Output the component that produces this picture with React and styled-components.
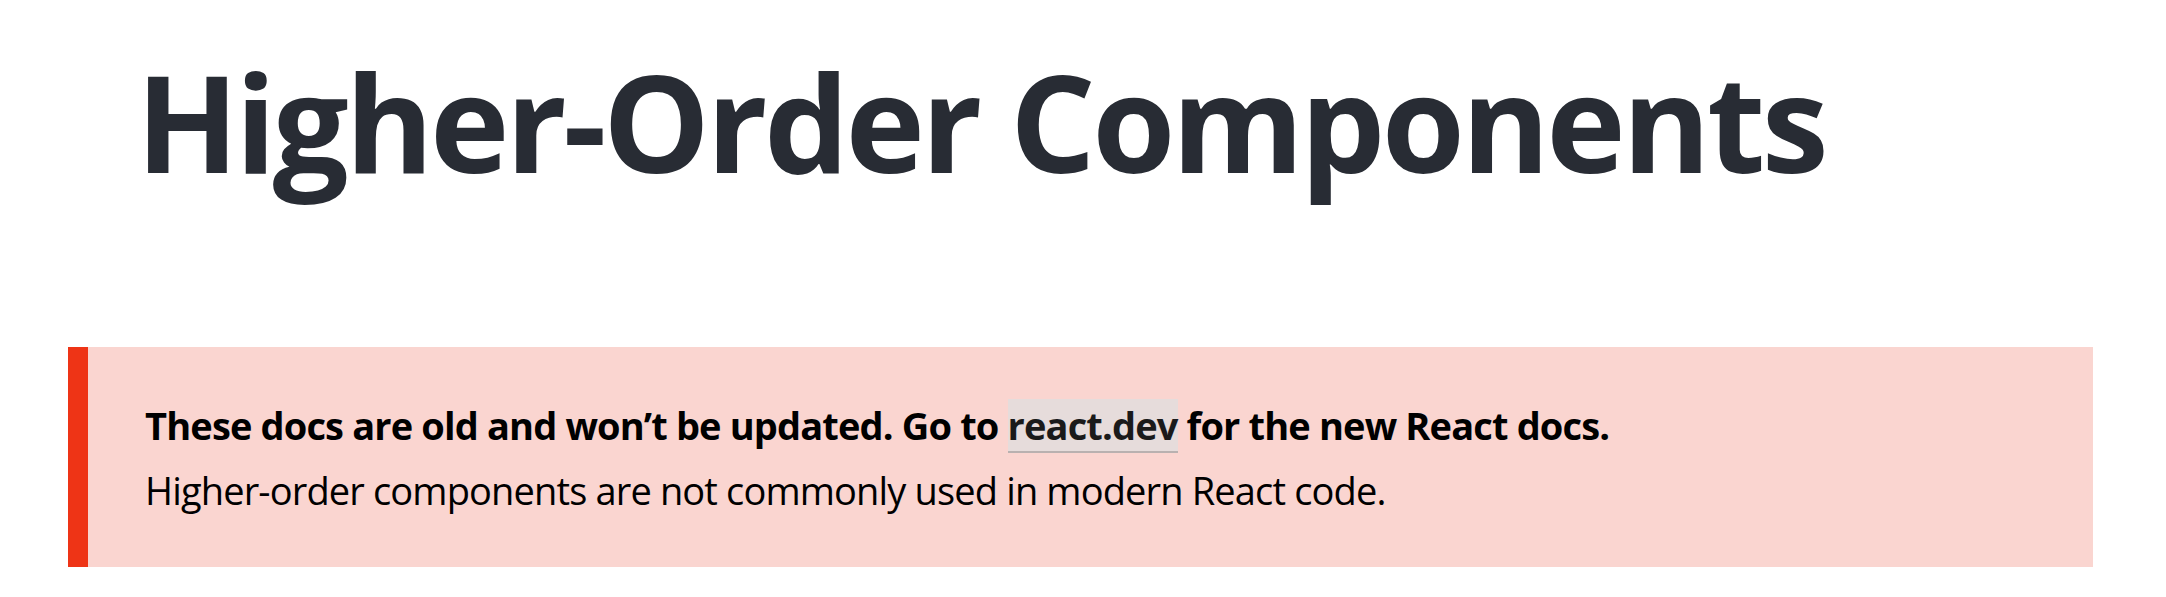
import React from "react";
import styled, { createGlobalStyle } from "styled-components";

const Global = createGlobalStyle`
  html, body { margin: 0; padding: 0; background: #ffffff; }
  body { font-family: "Open Sans", "Noto Sans", sans-serif; }
`;

const Page = styled.div`
  width: 2166px;
  height: 597px;
  box-sizing: border-box;
  padding: 40px 73px 0 68px;
  display: flex;
  flex-direction: column;
  overflow: hidden;
`;

const Title = styled.h1`
  margin: 0 0 146px 0;
  padding-left: 68px;
  font-family: "Open Sans", "Noto Sans", sans-serif;
  font-weight: 700;
  font-size: 134.5px;
  line-height: 161px;
  color: #282c34;
  letter-spacing: -3.6px;
  white-space: nowrap;
`;

const Callout = styled.div`
  display: flex;
  flex-direction: column;
  background: #fad5d0;
  border-left: 20px solid #ee3416;
  padding: 46px 40px 44px 57px;
  font-family: "Open Sans", "Noto Sans", sans-serif;
  font-size: 38px;
  line-height: 65px;
  color: #000000;
`;

const Line = styled.p`
  margin: 0;
  font-weight: ${(p) => (p.$bold ? 700 : 400)};
  letter-spacing: -0.85px;
  white-space: nowrap;
`;

const DocLink = styled.a`
  color: #1a1a1a;
  text-decoration: none;
  background-color: #e6dcdb;
  border-bottom: 2px solid #b9b1b0;
`;

export default function App() {
  return (
    <>
      <Global />
      <Page>
        <Title>Higher-Order Components</Title>
        <Callout>
          <Line $bold>
            These docs are old and won’t be updated. Go to{" "}
            <DocLink href="#">react.dev</DocLink> for the new React docs.
          </Line>
          <Line>Higher-order components are not commonly used in modern React code.</Line>
        </Callout>
      </Page>
    </>
  );
}
